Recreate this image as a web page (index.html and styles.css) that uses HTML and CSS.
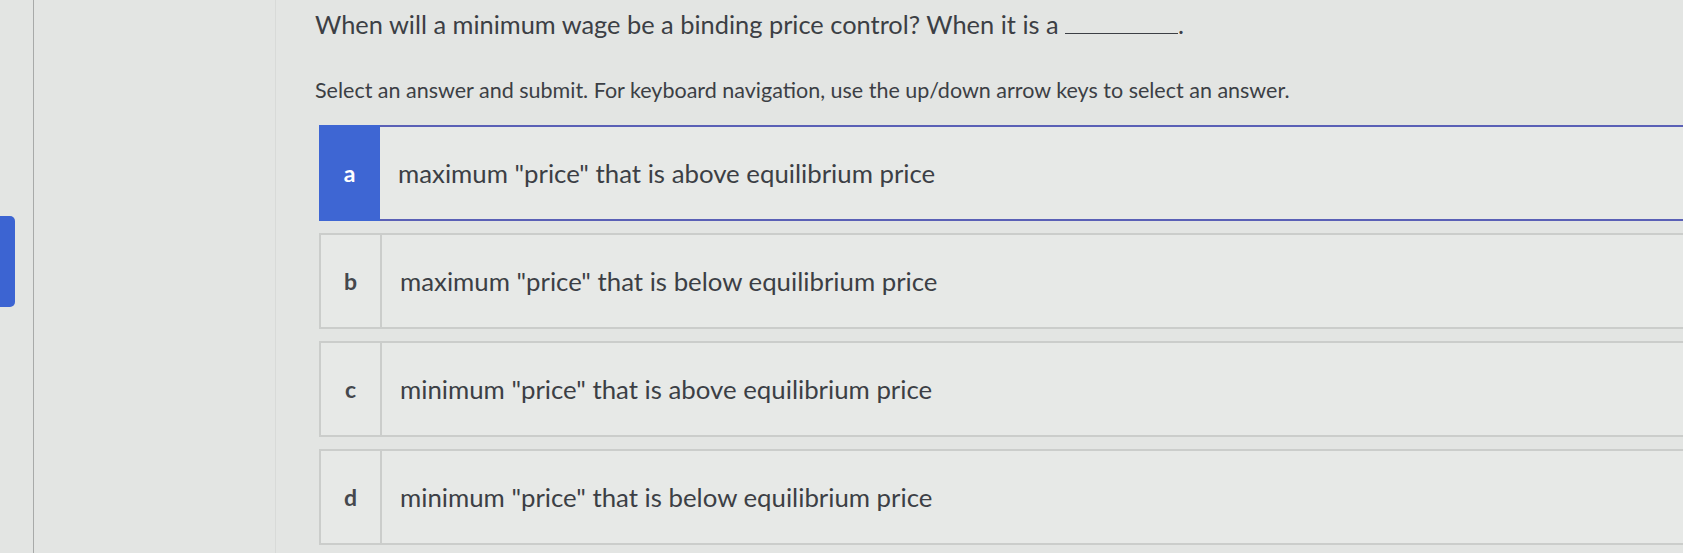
FILE: index.html
```html
<!DOCTYPE html>
<html lang="en">
<head>
    <meta charset="UTF-8">
    <meta name="viewport" content="width=device-width, initial-scale=1.0">
    <title>Question</title>
    <link rel="stylesheet" href="styles.css">
</head>
<body>
    <div class="screen">
        <aside class="rail">
            <span class="rail-tab"></span>
        </aside>
        <div class="gutter"></div>
        <main class="question">
            <h1 class="prompt">When will a minimum wage be a binding price control? When it is a <span class="blank"></span>.</h1>
            <p class="hint">Select an answer and submit. For keyboard navigation, use the up/down arrow keys to select an answer.</p>

            <ul class="choices">
                <li class="choice selected">
                    <span class="letter">a</span>
                    <span class="label">maximum "price" that is above equilibrium price</span>
                </li>
                <li class="choice">
                    <span class="letter">b</span>
                    <span class="label">maximum "price" that is below equilibrium price</span>
                </li>
                <li class="choice">
                    <span class="letter">c</span>
                    <span class="label">minimum "price" that is above equilibrium price</span>
                </li>
                <li class="choice">
                    <span class="letter">d</span>
                    <span class="label">minimum "price" that is below equilibrium price</span>
                </li>
            </ul>
        </main>
    </div>
</body>
</html>
```

FILE: styles.css
```css
body {
    margin: 0;
    font-family: Lato, "Open Sans", sans-serif;
    background-color: #e3e5e3;
    color: #3c3f45;
    overflow: hidden;
}
.screen {
    display: flex;
    height: 553px;
}
/* left side rail with the active tab */
.rail {
    width: 33px;
    flex-shrink: 0;
    border-right: 1px solid #a8aaa9;
}
.rail-tab {
    display: block;
    width: 15px;
    height: 91px;
    margin-top: 216px;
    background-color: #3c64d2;
    border-radius: 0 5px 5px 0;
}
.gutter {
    width: 241px;
    flex-shrink: 0;
    border-right: 1px solid #d8dad8;
}
.question {
    flex: 1;
    padding-left: 39px;
    min-width: 0;
}
.prompt {
    margin: 9px 0 0;
    font-size: 25.4px;
    font-weight: normal;
    line-height: 30px;
}
.blank {
    display: inline-block;
    width: 113px;
    border-bottom: 1px solid #3c3f45;
}
.hint {
    margin: 38px 0 0;
    font-size: 21.5px;
    line-height: 26px;
}
.choices {
    list-style: none;
    margin: 22px -40px 0 4px;
    padding: 0;
}
.choice {
    display: flex;
    height: 92px;
    margin-bottom: 12px;
    border: 2px solid #cbcdcb;
    border-right: none;
    background-color: #e7e9e7;
}
.choice.selected {
    border-color: #5a60b6;
    border-left: none;
}
.letter {
    width: 59px;
    flex-shrink: 0;
    display: flex;
    align-items: center;
    justify-content: center;
    font-size: 23px;
    font-weight: bold;
    color: #45484d;
    border-right: 2px solid #cbcdcb;
}
.selected .letter {
    width: 61px;
    margin: -2px 0;
    background-color: #3e66d3;
    color: #fff;
    border-right: none;
}
.label {
    display: flex;
    align-items: center;
    padding-left: 18px;
    font-size: 25.8px;
}
```
